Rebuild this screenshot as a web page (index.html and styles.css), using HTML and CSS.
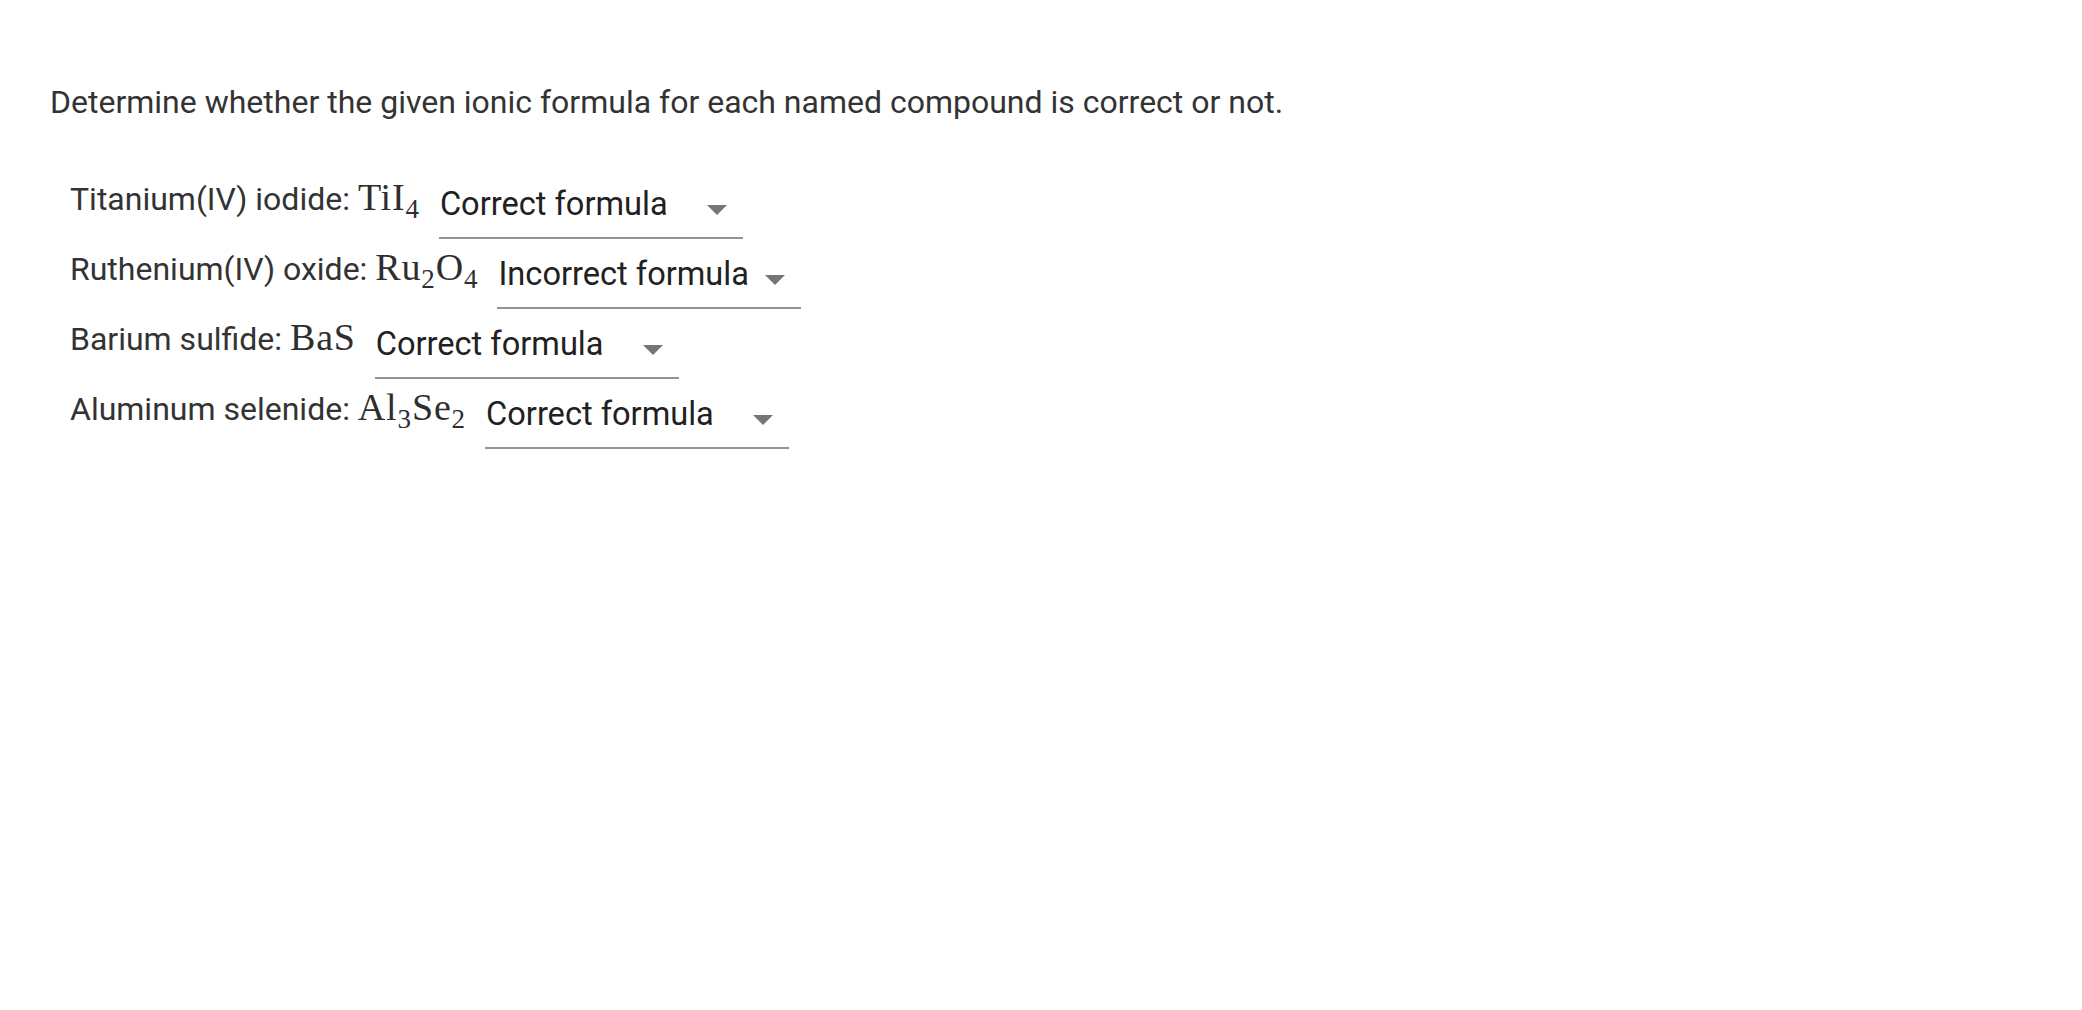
FILE: index.html
```html
<!DOCTYPE html>
<html lang="en">
<head>
<meta charset="utf-8">
<title>Ionic formulas</title>
<link rel="stylesheet" href="styles.css">
</head>
<body>
<main class="page">
  <p class="prompt">Determine whether the given ionic formula for each named compound is correct or not.</p>
  <div class="items">
    <div class="item">
      <div class="label">Titanium(IV) iodide: <span class="math">TiI<sub>4</sub></span></div>
      <div class="dropdown"><span class="value">Correct formula</span><span class="caret"></span></div>
    </div>
    <div class="item">
      <div class="label">Ruthenium(IV) oxide: <span class="math">Ru<sub>2</sub>O<sub>4</sub></span></div>
      <div class="dropdown"><span class="value">Incorrect formula</span><span class="caret"></span></div>
    </div>
    <div class="item">
      <div class="label">Barium sulfide: <span class="math">BaS</span></div>
      <div class="dropdown"><span class="value">Correct formula</span><span class="caret"></span></div>
    </div>
    <div class="item">
      <div class="label">Aluminum selenide: <span class="math">Al<sub>3</sub>Se<sub>2</sub></span></div>
      <div class="dropdown"><span class="value">Correct formula</span><span class="caret"></span></div>
    </div>
  </div>
</main>
</body>
</html>
```
FILE: styles.css
```css
html, body {
  margin: 0;
  padding: 0;
  background: #ffffff;
}

body {
  font-family: Roboto, "Liberation Sans", sans-serif;
  font-size: 32px;
  line-height: 40px;
  color: #333333;
}

.page {
  padding: 82px 0 0 50px;
}

.prompt {
  margin: 0;
  line-height: 40px;
}

.items {
  margin-top: 57px;
  padding-left: 20px;
  display: flex;
  flex-direction: column;
  gap: 10px;
}

.item {
  display: flex;
  align-items: flex-start;
}

.label {
  line-height: 40px;
  white-space: nowrap;
}

.math {
  font-family: "Liberation Serif", "Times New Roman", serif;
  font-size: 38px;
  line-height: 0;
  letter-spacing: 0.8px;
  color: #2e2e2e;
}

.math sub {
  font-size: 27px;
  line-height: 0;
  vertical-align: -8px;
  letter-spacing: 0;
  margin-right: 1px;
}

.dropdown {
  margin-left: 19px;
  margin-top: 5px;
  width: 304px;
  box-sizing: border-box;
  padding: 0 16px 13px 1px;
  border-bottom: 2px solid #949494;
  display: flex;
  justify-content: space-between;
  align-items: flex-start;
  color: #212121;
  font-size: 32.6px;
}

.value {
  line-height: 40px;
  white-space: nowrap;
}

.caret {
  margin-top: 21px;
  width: 0;
  height: 0;
  border-left: 10px solid transparent;
  border-right: 10px solid transparent;
  border-top: 10px solid #757575;
}
```
